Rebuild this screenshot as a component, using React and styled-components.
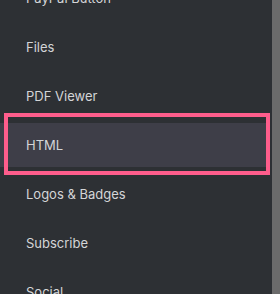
import React from "react";
import styled, { createGlobalStyle } from "styled-components";

const GlobalStyle = createGlobalStyle`
  html, body {
    margin: 0;
    padding: 0;
    background: #2d3034;
    overflow: hidden;
  }
`;

const Panel = styled.div`
  display: flex;
  width: 280px;
  height: 294px;
  background: #2d3034;
  overflow: hidden;
  font-family: Inter, "Noto Sans", sans-serif;
`;

const List = styled.ul`
  list-style: none;
  margin: -24px 0 0 0;
  padding: 0 2px 0 0;
  flex: 1;
  display: flex;
  flex-direction: column;
  gap: 5px;
`;

const Item = styled.li`
  position: relative;
  height: 44px;
  flex-shrink: 0;
  display: flex;
  align-items: center;
  padding-left: 26px;
  color: #d4d5d7;
  font-size: 13px;
  background: ${(p) => (p.$active ? "#3e3e48" : "transparent")};

  ${(p) =>
    p.$active &&
    `
    &::after {
      content: "";
      position: absolute;
      left: 4px;
      right: 0;
      top: -10px;
      bottom: -8px;
      border: 4px solid #fe5d8c;
    }
  `}
`;

const Scrollbar = styled.div`
  width: 8px;
  height: 100%;
  background: #6b6b6b;
  flex-shrink: 0;
`;

const items = [
  "PayPal Button",
  "Files",
  "PDF Viewer",
  "HTML",
  "Logos & Badges",
  "Subscribe",
  "Social",
];

export default function App() {
  return (
    <>
      <GlobalStyle />
      <Panel>
        <List>
          {items.map((name) => (
            <Item key={name} $active={name === "HTML"}>
              {name}
            </Item>
          ))}
        </List>
        <Scrollbar />
      </Panel>
    </>
  );
}
